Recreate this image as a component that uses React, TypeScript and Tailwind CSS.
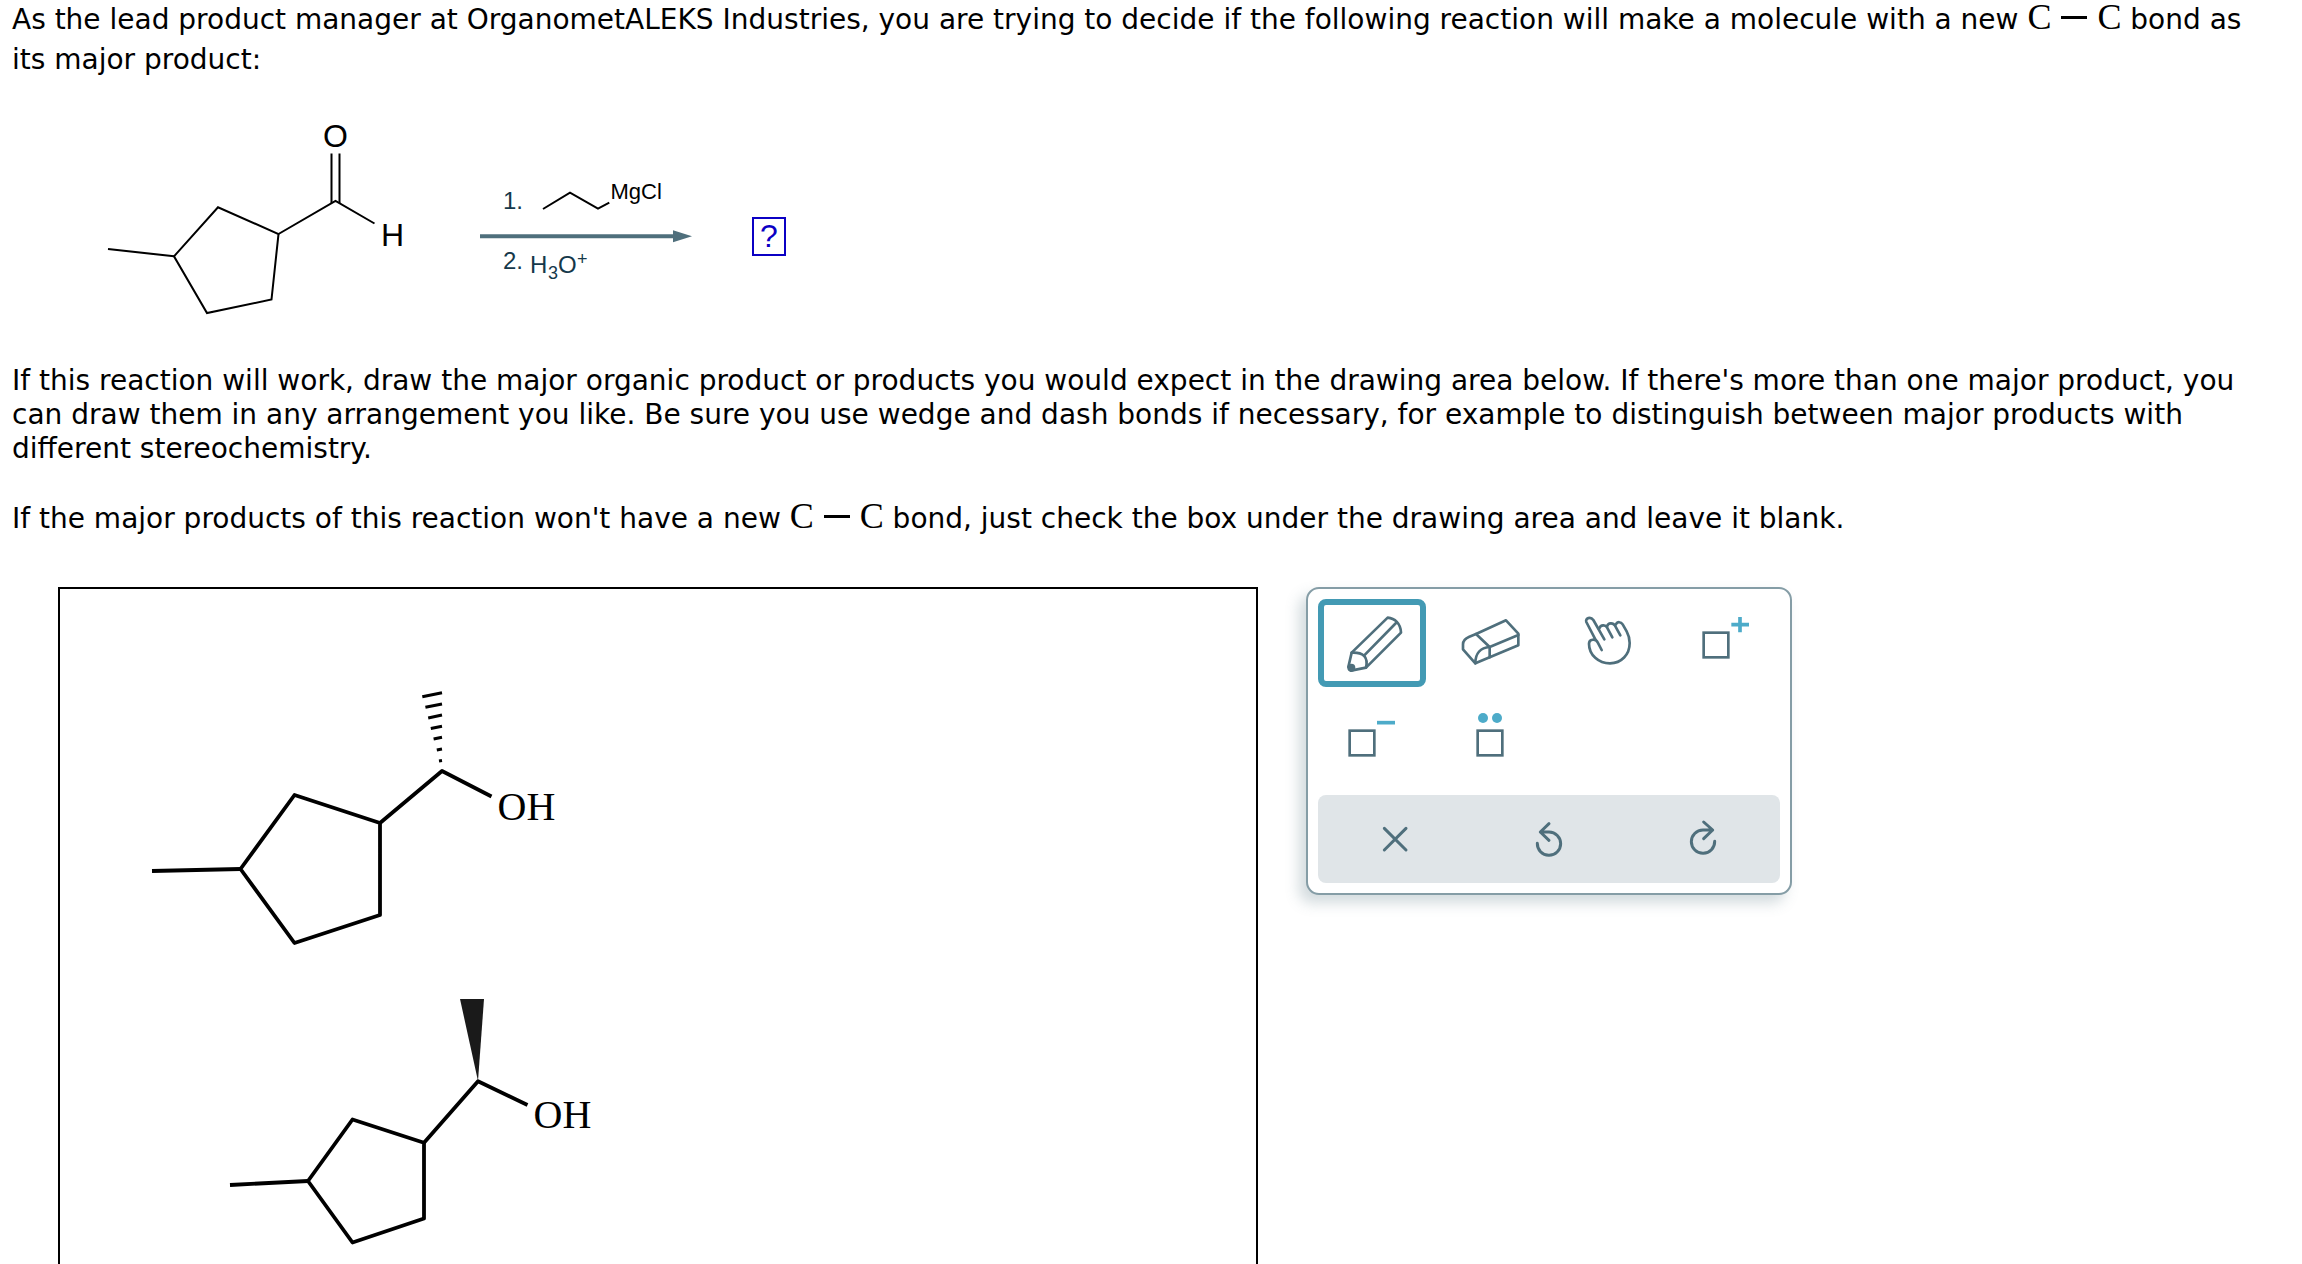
import { useState } from "react";
import type { ReactNode } from "react";

type Tool = {
  id: string;
  label: string;
  icon: ReactNode;
};

const SLATE = "#4f6f7c";
const SKY = "#4dabc9";

function CCBond() {
  return (
    <span className="inline-flex items-baseline gap-[10px] font-['Liberation_Serif',serif] text-[36px] leading-6">
      <span>C</span>
      <span className="h-[3px] w-[26px] self-center bg-black" />
      <span>C</span>
    </span>
  );
}

function StartingMaterial() {
  return (
    <svg
      viewBox="0 0 320 240"
      className="h-[240px] w-[320px] shrink-0 font-['Liberation_Sans',sans-serif] text-[32px]"
      role="img"
      aria-label="3-methylcyclopentanecarbaldehyde"
    >
      <g fill="none" stroke="#000" strokeWidth="2">
        <path d="M8 133L74 140.3" />
        <path d="M74 140.3L118 91.3L178.5 118L171.5 183.5L107 197Z" />
        <path d="M178.5 118L235.5 85L274.5 107.5" />
        <path d="M231.5 37.5V87M239.5 37.5V87" />
      </g>
      <text x="235.5" y="30.5" textAnchor="middle">O</text>
      <text x="281" y="130">H</text>
    </svg>
  );
}

function ReactionArrow() {
  return (
    <svg
      viewBox="0 0 212 112"
      className="h-[112px] w-[212px] shrink-0 overflow-visible font-['Liberation_Sans',sans-serif] text-[24px]"
      role="img"
      aria-label="1. propylmagnesium chloride, 2. aqueous acid"
    >
      <g fill="#15384a">
        <text x="23" y="29">1.</text>
        <text x="23" y="89">2.</text>
        <text x="50" y="93">H</text>
        <text x="68" y="99" fontSize="18">3</text>
        <text x="78" y="93">O</text>
        <text x="97" y="85" fontSize="18">+</text>
      </g>
      <path d="M63 29L90 12.7L118 28.7L129.3 22.7" fill="none" stroke="#000" strokeWidth="2" />
      <text x="130.5" y="18.7" fontSize="22">MgCl</text>
      <path d="M0 56.3H195" stroke={SLATE} strokeWidth="4" />
      <path d="M193 50.3L212 56.3L193 62.3Z" fill={SLATE} />
    </svg>
  );
}

// two alcohols that differ only at the new stereocentre
function Drawing() {
  return (
    <svg
      viewBox="0 0 600 672"
      className="block h-[672px] w-[600px] font-['Liberation_Serif',serif] text-[40px]"
      role="img"
      aria-label="Drawn products"
    >
      <g fill="none" stroke="#000" strokeWidth="3.8" strokeLinejoin="round">
        <path d="M92 282L180.5 280" />
        <path d="M180.5 280L234.5 206L320 234V326L234.5 354Z" />
        <path d="M320 234L382 182L431.5 207.5" />
        <path d="M170 596L248 592" />
        <path d="M248 592L292.5 530.5L364 553.7V629.5L292.5 653.5Z" />
        <path d="M364 553.7L418 492.3L467.5 516" />
      </g>
      <path
        d="M362.3 107.7L382 103.7M365.4 118.3L382 115M368.2 129L382 126M370.8 139.5L382 137.3M373.6 150L382 148.3M376.8 161L382 160M379 172L382 171.5"
        stroke="#000"
        strokeWidth="3"
      />
      <path d="M400 410H424L418 492Z" fill="#1a1a1a" />
      <text x="437.5" y="230.7">OH</text>
      <text x="473.5" y="539">OH</text>
    </svg>
  );
}

function ToolIcon({ children }: { children: ReactNode }) {
  return (
    <svg
      viewBox="0 0 288 228"
      className="h-[76px] w-[96px]"
      fill="none"
      stroke={SLATE}
      strokeWidth="8"
      strokeLinejoin="round"
      strokeLinecap="round"
      aria-hidden="true"
    >
      {children}
    </svg>
  );
}

function ActionIcon({ d }: { d: string }) {
  return (
    <svg
      viewBox="0 0 120 120"
      className="h-10 w-10"
      fill="none"
      stroke={SLATE}
      strokeWidth="9"
      strokeLinejoin="round"
      strokeLinecap="round"
      aria-hidden="true"
    >
      <path d={d} />
    </svg>
  );
}

const TOOLS: Tool[] = [
  {
    id: "draw",
    label: "Draw",
    icon: (
      <ToolIcon>
        <path d="M83 143L191 38C212 40 230 55 231 83L126 188L81 197L73 186Z" />
        <path d="M83 143C99 142 112 145 120 152C128 161 129 176 126 188" />
        <path d="M120 152L216 54" />
        <circle cx="82" cy="188" r="8" fill={SLATE} />
      </ToolIcon>
    ),
  },
  {
    id: "erase",
    label: "Erase",
    icon: (
      <ToolIcon>
        <path d="M102 87L192 46L229 86V121L100 175L63 133V118C63 108 72 99 82 95Z" />
        <path d="M102 87L143 126L229 90M143 126V157" />
        <path d="M143 126C116 128 100 145 100 175" />
      </ToolIcon>
    ),
  },
  {
    id: "move",
    label: "Move",
    icon: (
      <ToolIcon>
        <path d="M125 135L113 112C107 100 87 102 87 116C87 150 116 175 150 175C184 175 209 149 209 114C209 100 206 90 200 79L188 58C183 50 172 49 168 58" />
        <path d="M106 103L79 51C75 39 92 34 100 45L133 103" />
        <path d="M118 70C122 58 137 59 141 67L157 97" />
        <path d="M141 65C144 52 160 53 165 62L181 91" />
      </ToolIcon>
    ),
  },
  {
    id: "plus",
    label: "Add positive charge",
    icon: (
      <ToolIcon>
        <rect x="77" y="83" width="74" height="74" strokeLinejoin="miter" />
        <path d="M160 59H213M186 36V82" stroke={SKY} strokeWidth="11" strokeLinecap="butt" />
      </ToolIcon>
    ),
  },
  {
    id: "minus",
    label: "Add negative charge",
    icon: (
      <ToolIcon>
        <rect x="77" y="83" width="74" height="74" strokeLinejoin="miter" />
        <path d="M159 59H213" stroke={SKY} strokeWidth="11" strokeLinecap="butt" />
      </ToolIcon>
    ),
  },
  {
    id: "pair",
    label: "Add lone pair",
    icon: (
      <ToolIcon>
        <rect x="107" y="83" width="74" height="74" strokeLinejoin="miter" />
        <g fill={SKY} stroke="none">
          <circle cx="123" cy="45" r="15" />
          <circle cx="165" cy="45" r="15" />
        </g>
      </ToolIcon>
    ),
  },
];

const ACTIONS = [
  { id: "clear", label: "Clear", d: "M28 28L93 93M93 28L28 93" },
  {
    id: "undo",
    label: "Undo",
    d: "M60 14L34 39L60 64M34 39H60A35 35 0 1 1 25 73",
  },
  {
    id: "redo",
    label: "Redo",
    d: "M62 9L89 33L62 59M89 33H60A35 35 0 1 0 95 67",
  },
];

function Toolbox() {
  const [active, setActive] = useState("draw");

  return (
    <div className="shrink-0 rounded-[13px] border-2 border-[#859da6] bg-white p-2.5 shadow-[-7px_8px_14px_rgba(79,111,124,0.25)]">
      <div className="grid grid-cols-4 gap-2.5">
        {TOOLS.map((tool) => (
          <button
            key={tool.id}
            type="button"
            aria-label={tool.label}
            aria-pressed={active === tool.id}
            onClick={() => setActive(tool.id)}
            className={
              active === tool.id
                ? "rounded-lg border-[6px] border-[#439ab4]"
                : "rounded-lg border-[6px] border-transparent"
            }
          >
            {tool.icon}
          </button>
        ))}
      </div>

      <div className="mt-2.5 grid grid-cols-3 rounded-lg bg-[#e0e5e8]">
        {ACTIONS.map((action) => (
          <button
            key={action.id}
            type="button"
            aria-label={action.label}
            className="flex items-center justify-center py-6"
          >
            <ActionIcon d={action.d} />
          </button>
        ))}
      </div>
    </div>
  );
}

export default function App() {
  return (
    <main className="flex min-h-screen flex-col bg-white pr-6 pl-3 font-['DejaVu_Sans',sans-serif] text-[28px] leading-[34px] text-black">
      <p className="leading-[40px]">
        As the lead product manager at OrganometALEKS Industries, you are trying
        to decide if the following reaction will make a molecule with a new{" "}
        <CCBond /> bond as its major product:
      </p>

      <div className="mt-9 flex items-center gap-[60px] pb-2 pl-[88px]">
        <StartingMaterial />
        <ReactionArrow />
        <span className="border-2 border-[#0b00c4] px-[6px] font-['Liberation_Sans',sans-serif] text-[32px] leading-[35px] text-[#0b00c4]">
          ?
        </span>
      </div>

      <p>
        If this reaction will work, draw the major organic product or products
        you would expect in the drawing area below. If there's more than one
        major product, you can draw them in any arrangement you like. Be sure
        you use wedge and dash bonds if necessary, for example to distinguish
        between major products with different stereochemistry.
      </p>

      <p className="mt-9">
        If the major products of this reaction won't have a new <CCBond /> bond,
        just check the box under the drawing area and leave it blank.
      </p>

      <div className="mt-[51px] flex grow items-start gap-12 pl-[46px]">
        <div className="w-full max-w-[1200px] self-stretch overflow-hidden border-2 border-b-0 border-black">
          <Drawing />
        </div>
        <Toolbox />
      </div>
    </main>
  );
}
